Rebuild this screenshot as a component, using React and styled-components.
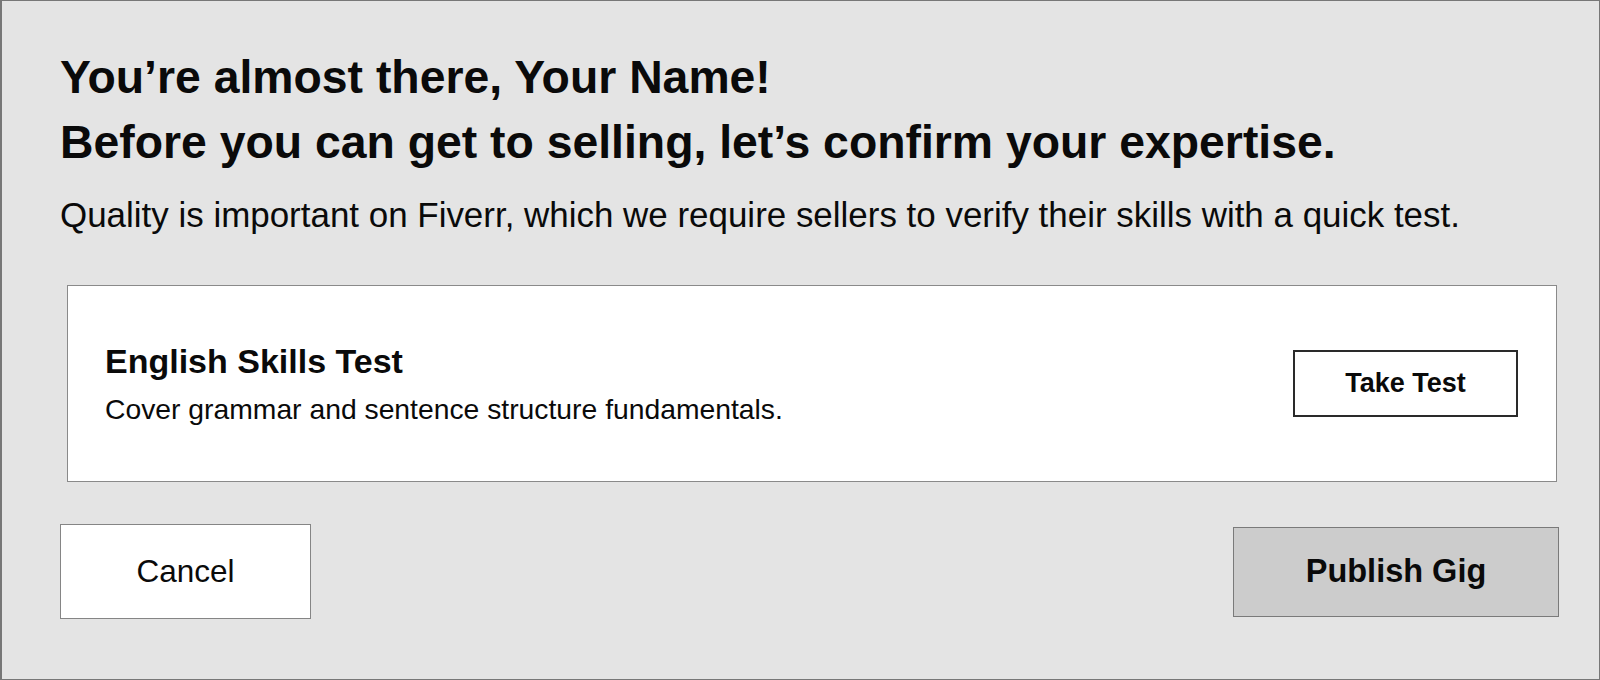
import React from "react";
import styled, { createGlobalStyle } from "styled-components";

const Global = createGlobalStyle`
  html, body { margin: 0; padding: 0; background: #e4e4e4; }
  body { font-family: "Liberation Sans", Arial, Helvetica, sans-serif; color: #0a0a0a; }
  * { box-sizing: border-box; }
`;

const Page = styled.div`
  width: 1600px;
  height: 680px;
  background: #e4e4e4;
  border: 1px solid #777;
  border-left-width: 2px;
  padding: 44px 41px 0 58px;
  display: flex;
  flex-direction: column;
  overflow: hidden;
`;

const Title = styled.h1`
  margin: 0;
  font-size: 46.35px;
  font-weight: 700;
  line-height: 65px;
`;

const TitleLine = styled.span`
  display: block;
`;

const Lead = styled.p`
  margin: 20px 0 0;
  font-size: 34.95px;
  font-weight: 400;
  line-height: 40px;
`;

const Card = styled.section`
  margin: 50px 1px 0 7px;
  height: 197px;
  background: #fff;
  border: 1px solid #8a8a8a;
  padding: 0 38px 0 37px;
  display: flex;
  align-items: center;
  justify-content: space-between;
`;

const CardText = styled.div`
  display: flex;
  flex-direction: column;
  gap: 11px;
`;

const CardTitle = styled.h2`
  margin: 0;
  font-size: 34px;
  font-weight: 700;
  line-height: 40px;
`;

const CardDesc = styled.p`
  margin: 0;
  font-size: 28.3px;
  line-height: 34px;
`;

const Button = styled.button`
  font-family: "Liberation Sans", Arial, Helvetica, sans-serif;
  color: #0a0a0a;
  cursor: pointer;
  display: flex;
  align-items: center;
  justify-content: center;
  padding: 0;
  width: ${(p) => p.$w}px;
  height: ${(p) => p.$h}px;
  font-size: ${(p) => p.$size}px;
  font-weight: ${(p) => (p.$bold ? 700 : 400)};
  background: ${(p) => p.$bg || "#fff"};
  border: ${(p) => p.$border || "1px solid #858585"};
`;

const Footer = styled.div`
  margin-top: 42px;
  margin-right: -1px;
  display: flex;
  align-items: center;
  justify-content: space-between;
`;

export default function App() {
  return (
    <>
      <Global />
      <Page>
        <Title>
          <TitleLine>You’re almost there, Your Name!</TitleLine>
          <TitleLine>Before you can get to selling, let’s confirm your expertise.</TitleLine>
        </Title>
        <Lead>
          Quality is important on Fiverr, which we require sellers to verify their skills with a quick test.
        </Lead>
        <Card>
          <CardText>
            <CardTitle>English Skills Test</CardTitle>
            <CardDesc>Cover grammar and sentence structure fundamentals.</CardDesc>
          </CardText>
          <Button $w={225} $h={67} $size={27} $bold $border="2px solid #2a2a2a">
            Take Test
          </Button>
        </Card>
        <Footer>
          <Button $w={251} $h={95} $size={31.5}>
            Cancel
          </Button>
          <Button $w={326} $h={90} $size={32.5} $bold $bg="#cccccc" $border="1px solid #7a7a7a">
            Publish Gig
          </Button>
        </Footer>
      </Page>
    </>
  );
}
